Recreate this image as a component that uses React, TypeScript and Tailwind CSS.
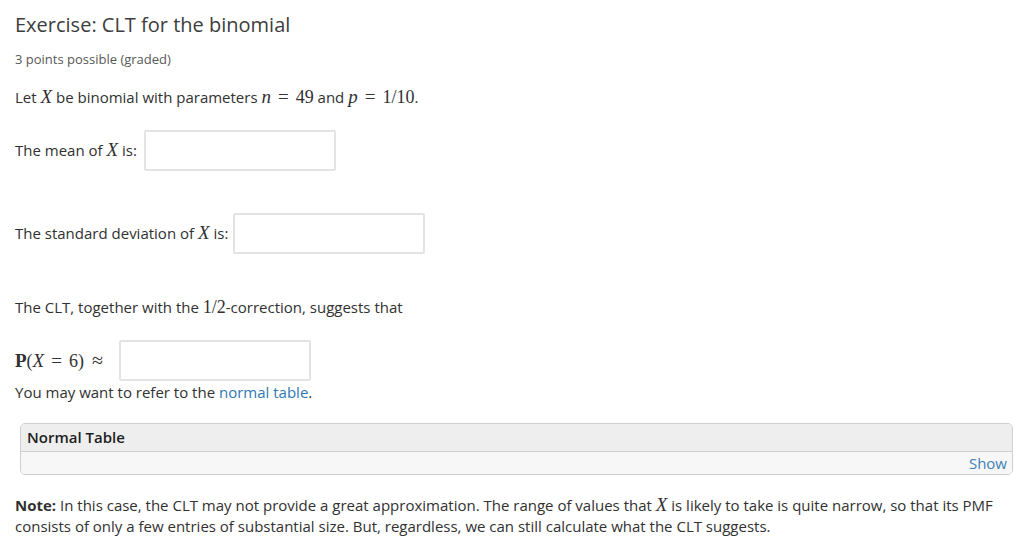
import React from 'react';

const sans = { fontFamily: '"Open Sans", "Liberation Sans", sans-serif' };

function M({ children, bold }: { children: React.ReactNode; bold?: boolean }) {
  return (
    <span className={`font-['Liberation_Serif',serif] text-[18px] leading-none ${bold ? 'font-bold' : ''}`}>{children}</span>
  );
}

function V({ children }: { children: React.ReactNode }) {
  return <span className="font-['Liberation_Serif',serif] text-[19px] italic leading-none">{children}</span>;
}

// relation symbol with TeX-like spacing
function R({ children }: { children: React.ReactNode }) {
  return <span className="mx-[7px] font-['Liberation_Serif',serif] text-[19px] leading-none">{children}</span>;
}

function AnswerBox() {
  return <div className="h-[41px] w-[192px] rounded-[2px] border-2 border-[#e3e3e3] bg-white" />;
}

export default function App() {
  return (
    <div className="h-[553px] w-[1024px] bg-white pl-[15px] pr-[11px] text-[15px] text-[#313131]" style={sans}>
      <h2 className="pt-[12px] text-[20px] font-normal leading-[26px] text-[#3d3d3d]">Exercise: CLT for the binomial</h2>
      <div className="mt-[12px] text-[13px] leading-[18px] text-[#585858]">3 points possible (graded)</div>

      <p className="mt-[18px] leading-[22px]">
        Let <V>X</V> be binomial with parameters <V>n</V>
        <R>=</R>
        <M>49</M> and <V>p</V>
        <R>=</R>
        <M>1/10</M>.
      </p>

      <div className="mt-[22px] flex items-center gap-[7px]">
        <span>
          The mean of <V>X</V> is:
        </span>
        <AnswerBox />
      </div>

      <div className="mt-[42px] flex items-center gap-[5px]">
        <span>
          The standard deviation of <V>X</V> is:
        </span>
        <AnswerBox />
      </div>

      <p className="mt-[42px] leading-[22px]">
        The CLT, together with the <M>1/2</M>-correction, suggests that
      </p>

      <div className="mt-[22px] flex items-center gap-[16px]">
        <span className="text-[19px]">
          <span className="font-['Liberation_Serif',serif] text-[19px] font-bold">P</span>
          <M>(</M>
          <V>X</V>
          <R>=</R>
          <M>6)</M>
          <span className="ml-[8px] font-['Liberation_Serif',serif] text-[20px]">≈</span>
        </span>
        <AnswerBox />
      </div>

      <p className="mt-0 leading-[22px]">
        You may want to refer to the <span className="text-[#2f78b4]">normal table</span>.
      </p>

      <div className="mt-[20px] ml-[5px] overflow-hidden rounded-[5px] border border-[#cfcfcf]">
        <div className="h-[28px] border-b border-[#cfcfcf] bg-[#eeeeee] pl-[6px] pt-[3px] text-[15px] font-semibold leading-[20px] text-[#1e1e1e]">
          Normal Table
        </div>
        <div className="flex h-[22px] justify-end bg-[#f7f7f7] pr-[5px] text-[15px] leading-[22px] text-[#3e7fb6]">
          Show
        </div>
      </div>

      <p className="mt-[20px] leading-[21px]">
        <span className="font-bold">Note:</span> In this case, the CLT may not provide a great approximation. The range of
        values that <V>X</V> is likely to take is quite narrow, so that its PMF consists of only a few entries of
        substantial size. But, regardless, we can still calculate what the CLT suggests.
      </p>
    </div>
  );
}
